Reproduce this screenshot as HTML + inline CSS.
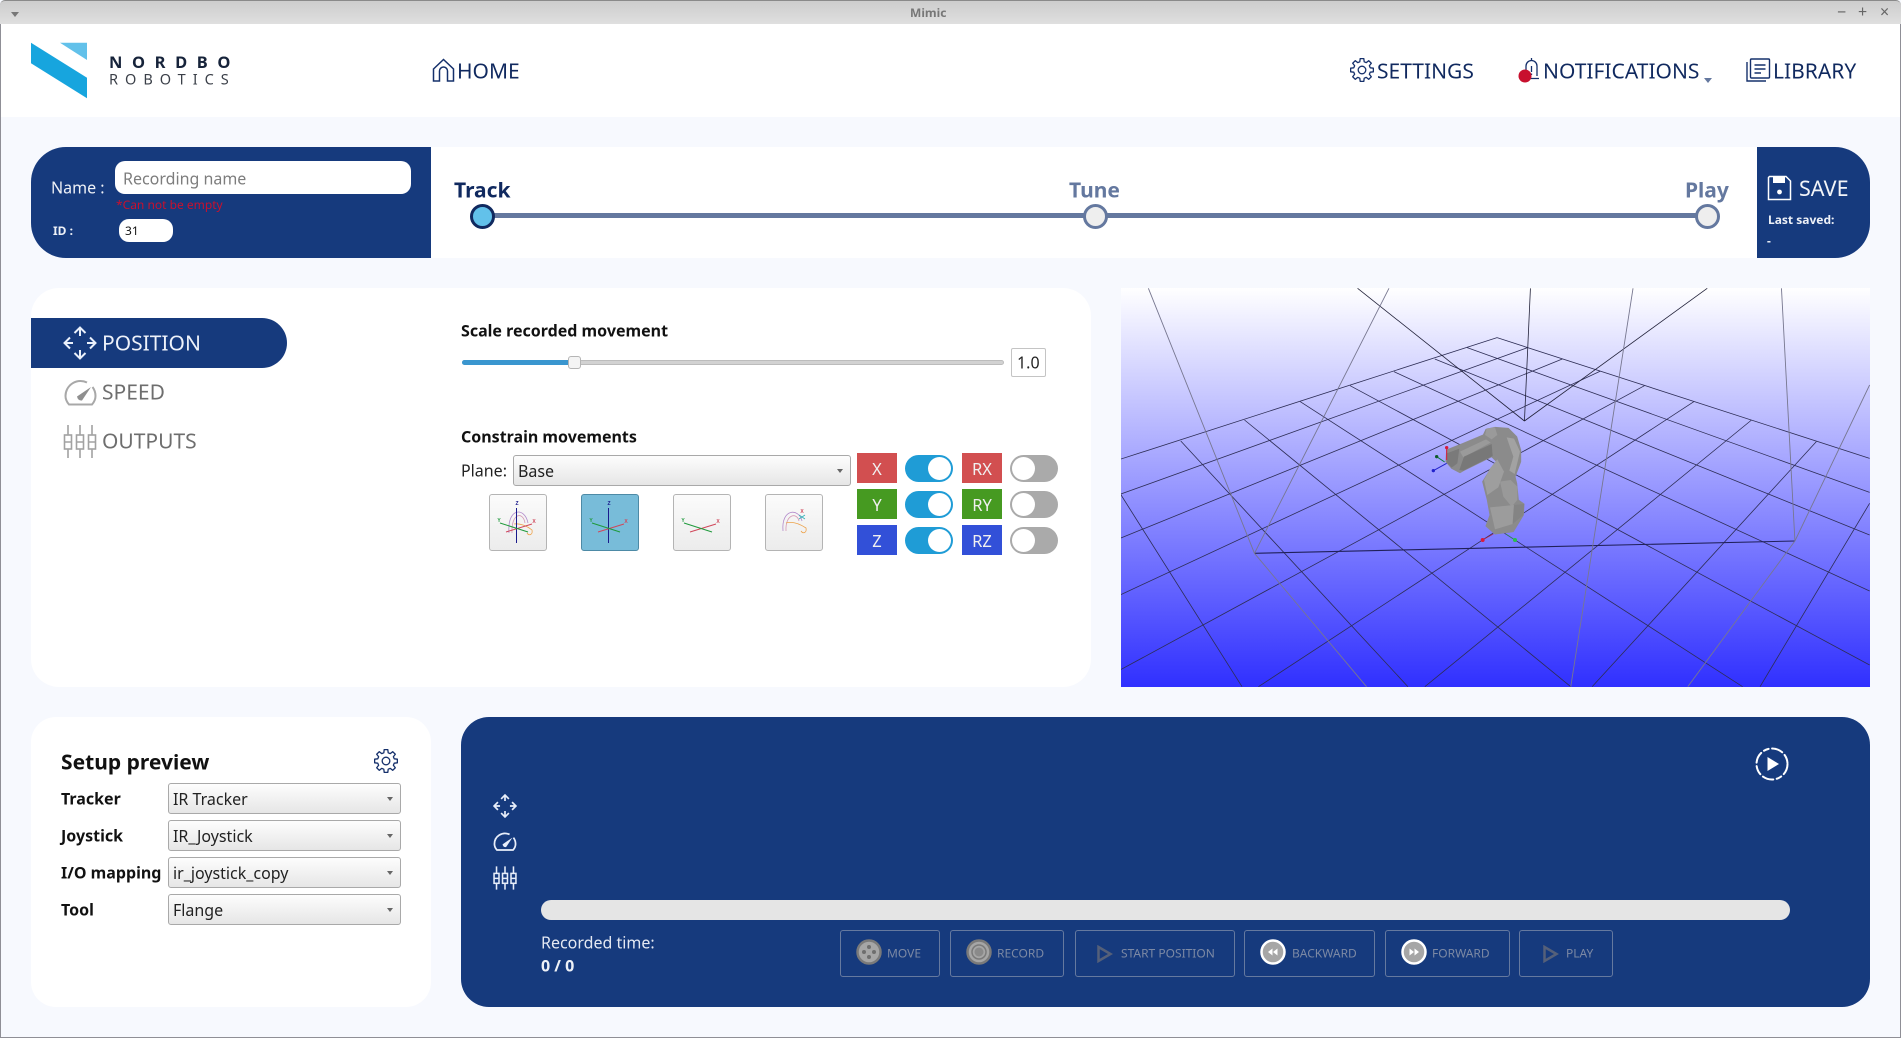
<!DOCTYPE html>
<html><head><meta charset="utf-8"><title>Mimic</title>
<style>
html,body{margin:0;padding:0;width:1901px;height:1038px;overflow:hidden;background:#f7f9fe;font-family:"Noto Sans","Noto Sans CJK JP","Liberation Sans",sans-serif}
*{box-sizing:border-box}
.a{position:absolute}
.t{position:absolute;white-space:nowrap;transform:translateY(-50%);line-height:1.2}
.nav{font-size:21px;color:#10295f}
.side{font-size:21px;color:#6e6e6e}
.lab{font-size:16px;font-weight:700;color:#111}
.sel{position:absolute;border:1px solid #a9a9a9;border-radius:3px;background:linear-gradient(#fdfdfd,#e6e6e6);font-size:16px;color:#222}
.sel span{position:absolute;left:4px;top:50%;transform:translateY(-50%);white-space:nowrap}
.sel i{position:absolute;right:7px;top:50%;margin-top:-2px;border:3.5px solid transparent;border-top:4px solid #666;border-bottom:0}
.axb{position:absolute;top:494px;width:58px;height:57px;border:1px solid #b4b4b4;border-radius:3px;background:linear-gradient(#fbfbfb,#ececec)}
.box{position:absolute;width:40px;height:30px;color:#f0f0f0;font-size:16.5px;text-align:center;line-height:31px}
.tg{position:absolute;width:48px;height:27px;border-radius:14px}
.tg i{position:absolute;top:2px;width:23px;height:23px;border-radius:50%;background:#fff}
.on{background:#1f9cd6}.on i{right:2px}
.off{background:#aaa}.off i{left:2px}
.cb{position:absolute;top:930px;height:47px;border:1px solid #65799f;border-radius:3px}
.cbt{position:absolute;top:953px;transform:translateY(-50%);white-space:nowrap;font-size:12px;color:#7c89a4}
</style></head><body>

<!-- title bar -->
<div class="a" style="left:0;top:0;width:1901px;height:24px;background:linear-gradient(#cdcdcd,#dfdfdf);border-top:1px solid #8a8a8a;border-radius:5px 5px 0 0"></div>
<div class="a" style="left:11px;top:12px;border:4px solid transparent;border-top:5px solid #777;border-bottom:0"></div>
<div class="t" style="left:910px;top:13px;font-size:12px;font-weight:700;color:#777">Mimic</div>
<div class="t" style="left:1837px;top:12px;font-size:16px;color:#666">−</div>
<div class="t" style="left:1858px;top:12px;font-size:16px;color:#666">+</div>
<div class="t" style="left:1880px;top:12px;font-size:16px;color:#666">×</div>

<!-- header -->
<div class="a" style="left:0;top:24px;width:1901px;height:93px;background:#fff"></div>
<svg class="a" style="left:0;top:0" width="120" height="110"><polygon points="31,42.7 87,77.7 87,98.3 31,63.3" fill="#17a5de"/><polygon points="60,42.7 87,42.7 87,60" fill="#62c1ea"/></svg>
<div class="t" style="left:109px;top:62px;font-size:16.5px;font-weight:700;letter-spacing:9.6px;color:#16233a">NORDBO</div>
<div class="t" style="left:109px;top:80px;font-size:14.5px;letter-spacing:7px;color:#3a3f48">ROBOTICS</div>

<svg class="a" style="left:432px;top:58px" width="23" height="24" viewBox="0 0 23 24" fill="none" stroke="#15306b" stroke-width="1.5"><path d="M1.5 11 L11.5 1.5 L21.500 11 V23 H15.500 V13 A4 4 0 0 0 7.500 13 V23 H1.500 Z"/></svg>
<div class="t nav" style="left:457px;top:72px">HOME</div>

<svg class="a" style="left:1350px;top:58px" width="24" height="24" viewBox="0 0 24 24" fill="none" stroke="#15306b" stroke-width="1.300" stroke-linejoin="round"><g transform="translate(12 12)"><polygon points="-2.2,-8.21 -1.8,-11.36 1.8,-11.36 2.2,-8.21 4.25,-7.36 6.76,-9.3 9.3,-6.76 7.36,-4.25 8.21,-2.2 11.36,-1.8 11.36,1.8 8.21,2.2 7.36,4.25 9.3,6.76 6.76,9.3 4.25,7.36 2.2,8.21 1.8,11.36 -1.8,11.36 -2.2,8.21 -4.25,7.36 -6.76,9.3 -9.3,6.76 -7.36,4.25 -8.21,2.2 -11.36,1.8 -11.36,-1.8 -8.21,-2.2 -7.36,-4.25 -9.3,-6.76 -6.76,-9.3 -4.25,-7.36"/><circle r="3.800"/></g></svg>
<div class="t nav" style="left:1377px;top:72px">SETTINGS</div>

<svg class="a" style="left:1518px;top:57px" width="24" height="26" viewBox="0 0 24 26" fill="none" stroke="#15306b" stroke-width="1.3"><path d="M13.5 1v3M8 19V9a5.5 5.5 0 0 1 11 0v10M5 21.5H21M13.5 9v6M13.5 16.5v1.5"/><circle cx="7" cy="19" r="6.5" fill="#c8102e" stroke="none"/></svg>
<div class="t nav" style="left:1543px;top:72px">NOTIFICATIONS</div>
<div class="a" style="left:1704px;top:78px;border:4px solid transparent;border-top:5px solid #64789f;border-bottom:0"></div>

<svg class="a" style="left:1746px;top:58px" width="25" height="24" viewBox="0 0 25 24" fill="none" stroke="#15306b" stroke-width="1.4"><rect x="4.5" y="1" width="19" height="19" rx="1"/><path d="M1 4V23H20M8.5 7H19.5M8.5 11H19.5M8.5 15H15"/></svg>
<div class="t nav" style="left:1773px;top:72px">LIBRARY</div>

<!-- top panel -->
<div class="a" style="left:31px;top:147px;width:400px;height:111px;background:#163a7d;border-radius:35px 0 0 35px"></div>
<div class="a" style="left:431px;top:147px;width:1326px;height:111px;background:#fff"></div>
<div class="a" style="left:1757px;top:147px;width:113px;height:111px;background:#163a7d;border-radius:0 35px 35px 0"></div>
<div class="t" style="left:51px;top:188px;font-size:16px;color:#eef1f7">Name :</div>
<div class="a" style="left:115px;top:161px;width:296px;height:33px;background:#fff;border-radius:10px"></div>
<div class="t" style="left:123px;top:179px;font-size:16px;color:#7d7d7d">Recording name</div>
<div class="t" style="left:116px;top:205px;font-size:12px;color:#c8102e">*Can not be empty</div>
<div class="t" style="left:53px;top:231px;font-size:12px;font-weight:700;color:#eef1f7">ID :</div>
<div class="a" style="left:119px;top:219px;width:54px;height:23px;background:#fff;border-radius:10px"></div>
<div class="t" style="left:125px;top:231px;font-size:12px;color:#111">31</div>

<div class="a" style="left:482px;top:213px;width:1225px;height:5px;background:#64789f"></div>
<div class="a" style="left:469.5px;top:204px;width:25px;height:25px;border-radius:50%;background:#62c1ea;border:3px solid #10295f"></div>
<div class="a" style="left:1082.5px;top:204px;width:25px;height:25px;border-radius:50%;background:#eee;border:3px solid #64789f"></div>
<div class="a" style="left:1694.5px;top:204px;width:25px;height:25px;border-radius:50%;background:#eee;border:3px solid #64789f"></div>
<div class="t" style="left:454px;top:191px;font-size:21px;font-weight:700;color:#10295f">Track</div>
<div class="t" style="left:1069px;top:191px;font-size:21px;font-weight:700;color:#64789f">Tune</div>
<div class="t" style="left:1685px;top:191px;font-size:21px;font-weight:700;color:#64789f">Play</div>

<svg class="a" style="left:1767px;top:175px" width="25" height="26" viewBox="0 0 25 26" fill="none" stroke="#fff" stroke-width="1.5"><path d="M2.5 1.5H19L23.5 6V24.5H1.5V2.5Z"/><rect x="6" y="2" width="12" height="6" fill="#fff" stroke="none"/><circle cx="12.5" cy="17" r="2.4" fill="#fff" stroke="none"/></svg>
<div class="t" style="left:1799px;top:189px;font-size:21.5px;color:#f2f4f8">SAVE</div>
<div class="t" style="left:1768px;top:220px;font-size:12px;font-weight:700;color:#eef1f7">Last saved:</div>
<div class="t" style="left:1767px;top:241px;font-size:12px;font-weight:700;color:#eef1f7">-</div>

<!-- middle left -->
<div class="a" style="left:31px;top:288px;width:1060px;height:399px;background:#fff;border-radius:28px"></div>
<div class="a" style="left:31px;top:318px;width:256px;height:50px;background:#163a7d;border-radius:0 25px 25px 0"></div>
<svg class="a" style="left:63px;top:326px" width="34" height="34" viewBox="0 0 34 34" fill="none" stroke="#eaf0fb" stroke-width="2"><path d="M17 10V2M11.500 7L17 1.500L22.500 7M17 24V32M11.500 27L17 32.500L22.500 27M10 17H2M7 11.500L1.500 17L7 22.500M24 17H32M27 11.500L32.500 17L27 22.500"/></svg>
<div class="t" style="left:102px;top:344px;font-size:21px;color:#eef2fa">POSITION</div>
<svg class="a" style="left:64px;top:379px" width="33" height="27" viewBox="0 0 33 27" fill="none" stroke="#a8a8a8" stroke-width="2"><path d="M23 3.500A15 15 0 0 0 1.500 17Q1.500 21.500 5 25.500H28Q31.500 21.500 31.500 17Q31.500 12 28.500 8"/><path d="M13 17.500L27 8L18 21.500Q14 22 13 17.500Z" fill="#8f8f8f" stroke="none"/></svg>
<div class="t side" style="left:102px;top:393px">SPEED</div>
<svg class="a" style="left:63px;top:425px" width="34" height="33" viewBox="0 0 34 33" fill="none" stroke="#a2a2a2" stroke-width="1.6"><path d="M5 0V10M5 24V33M17 0V10M17 24V33M29 0V10M29 24V33"/><rect x="1.500" y="10" width="7" height="14"/><rect x="13.500" y="10" width="7" height="14"/><rect x="25.500" y="10" width="7" height="14"/><path d="M1.500 17H8.500M13.500 17H20.500M25.500 17H32.500"/></svg>
<div class="t side" style="left:102px;top:442px">OUTPUTS</div>

<div class="t" style="left:461px;top:331px;font-size:16px;font-weight:700;color:#111">Scale recorded movement</div>
<div class="a" style="left:462px;top:359.500px;width:542px;height:5px;background:#d2d2d2;border:1px solid #bcbcbc;border-radius:3px"></div>
<div class="a" style="left:462px;top:359.500px;width:110px;height:5px;background:#3a96cf;border-radius:3px"></div>
<div class="a" style="left:568px;top:356px;width:13px;height:13px;background:#f4f4f4;border:1px solid #b5b5b5;border-radius:3px"></div>
<div class="a" style="left:1011px;top:348px;width:35px;height:29px;background:#fff;border:1px solid #c4c4c4;border-radius:2px"></div>
<div class="t" style="left:1017px;top:363px;font-size:16px;color:#222">1.0</div>

<div class="t" style="left:461px;top:437px;font-size:16px;font-weight:700;color:#111">Constrain movements</div>
<div class="t" style="left:461px;top:471px;font-size:16px;color:#222">Plane:</div>
<div class="sel" style="left:513px;top:455px;width:338px;height:31px"><span>Base</span><i></i></div>

<div class="axb" style="left:489px"><svg width="56" height="55" viewBox="0 0 56 55" fill="none" font-family="Liberation Sans,sans-serif" font-size="5" font-weight="700" text-anchor="middle" stroke-width=".8"><path d="M19 38C17 12 35 12 38 28" stroke="#b28acb"/><path d="M22 38C21 18 33 16 35 28" stroke="#d59ab5"/><path d="M24 29C30 28 37 31 42 35C43 40 39 41 37 38" stroke="#eda24a"/><path d="M26.500 13V48" stroke="#1a1a8c" stroke-width="1"/><path d="M16 37L42 29" stroke="#d0475a" stroke-width="1"/><path d="M10 28L38 37" stroke="#1f9a3c" stroke-width="1"/><text x="27" y="10" fill="#1a1a8c" stroke="none">Z</text><text x="44" y="28" fill="#d0475a" stroke="none">X</text><text x="9" y="27" fill="#1f9a3c" stroke="none">Y</text></svg></div>
<div class="axb" style="left:581px;background:#78bcd9;border-color:#4d8aa6"><svg width="56" height="55" viewBox="0 0 56 55" fill="none" font-family="Liberation Sans,sans-serif" font-size="5" font-weight="700" text-anchor="middle"><path d="M26.500 13V48" stroke="#1a1a8c" stroke-width="1"/><path d="M16 37L42 29" stroke="#d0475a" stroke-width="1"/><path d="M10 28L38 37" stroke="#1f9a3c" stroke-width="1"/><text x="27" y="10" fill="#1a1a8c" stroke="none">Z</text><text x="44" y="28" fill="#d0475a" stroke="none">X</text><text x="9" y="27" fill="#1f9a3c" stroke="none">Y</text></svg></div>
<div class="axb" style="left:673px"><svg width="56" height="55" viewBox="0 0 56 55" fill="none" font-family="Liberation Sans,sans-serif" font-size="5" font-weight="700" text-anchor="middle"><path d="M16 37L42 29" stroke="#d0475a" stroke-width="1"/><path d="M10 28L38 37" stroke="#1f9a3c" stroke-width="1"/><text x="44" y="28" fill="#d0475a" stroke="none">X</text><text x="9" y="27" fill="#1f9a3c" stroke="none">Y</text></svg></div>
<div class="axb" style="left:765px"><svg width="56" height="55" viewBox="0 0 56 55" fill="none" font-family="Liberation Sans,sans-serif" font-size="5" font-weight="700" text-anchor="middle" stroke-width=".8"><path d="M17 36C15 13 33 13 36 26" stroke="#b28acb"/><path d="M20 36C19 19 31 17 33 26" stroke="#d59ab5"/><path d="M20 28C27 26 34 29 40 33C41 38 37 39 35 36" stroke="#eda24a"/><path d="M33 20L39 24M39 20L33 24" stroke="#35b0b8"/><text x="36" y="18" fill="#d0475a" stroke="none">X</text></svg></div>

<div class="box" style="left:857px;top:453px;background:#d24f50">X</div>
<div class="box" style="left:857px;top:489px;background:#469a21">Y</div>
<div class="box" style="left:857px;top:525px;background:#3250d8">Z</div>
<div class="box" style="left:962px;top:453px;background:#d24f50">RX</div>
<div class="box" style="left:962px;top:489px;background:#469a21">RY</div>
<div class="box" style="left:962px;top:525px;background:#3250d8">RZ</div>
<div class="tg on" style="left:905px;top:455px"><i></i></div>
<div class="tg on" style="left:905px;top:491px"><i></i></div>
<div class="tg on" style="left:905px;top:527px"><i></i></div>
<div class="tg off" style="left:1010px;top:455px"><i></i></div>
<div class="tg off" style="left:1010px;top:491px"><i></i></div>
<div class="tg off" style="left:1010px;top:527px"><i></i></div>

<!-- 3D viewport -->
<div class="a" style="left:1121px;top:288px;width:749px;height:399px;background:linear-gradient(#ffffff,#3030ff);overflow:hidden">
<svg class="a" style="left:-1px;top:-3px" width="781" height="410" viewBox="0 0 1568 1230" preserveAspectRatio="none" fill="none">
<path vector-effect="non-scaling-stroke" stroke="#2d2d55" stroke-width=".8" d="M757 158L0 523M757 158L1505 520M697 188L1505 622M632 222L1505 750M550 260L1505 918M462 302L1505 1140M362 350L1250 1205M250 405L905 1205M122 468L578 1205M0 625L245 1205M818 188L0 628M888 222L0 760M965 258L0 930M1053 302L0 1155M1152 350L278 1205M1268 405L612 1205M1398 470L948 1205M1505 655L1285 1205"/>
<path vector-effect="non-scaling-stroke" stroke="#22223a" stroke-width=".8" d="M477 10L812 408M1179 10L812 408M824 10L812 408"/>
<path vector-effect="non-scaling-stroke" d="M270 805L1355 768" stroke="#20205a" stroke-width="1.100"/>
<path vector-effect="non-scaling-stroke" d="M57 10L270 805L495 1205M540 10L270 805M1328 10L1355 768L1140 1205M1030 10L905 1205M1505 300L1355 768" stroke="#777790" stroke-width=".9"/>
</svg>
</div>
<svg class="a" style="left:1380px;top:400px" width="200" height="170" viewBox="0 0 600 510">
<polygon points="200,150 250,130 310,105 318,88 345,82 385,85 410,110 422,150 422,185 405,230 410,250 415,300 432,312 430,345 400,395 345,402 318,378 330,345 322,300 308,245 330,210 350,185 335,170 250,212 240,218 215,205 198,185" fill="#8b8b8b" stroke="#8b8b8b" stroke-width="3" stroke-linejoin="round"/>
<polygon points="320,85 345,82 352,105 335,118 315,105" fill="#9a9a9a"/>
<polygon points="380,112 402,116 420,155 404,222 388,212 400,170" fill="#a2a2a2"/>
<polygon points="240,155 318,118 332,128 250,172" fill="#9a9a9a"/>
<polygon points="200,160 238,146 232,190 215,203 200,188" fill="#7a7a7a"/>
<polygon points="238,210 252,170 335,132 338,168 250,212" fill="#787878"/>
<polygon points="312,240 330,205 352,178 372,215 355,262 322,285" fill="#9e9e9e"/>
<polygon points="360,245 392,240 412,260 412,300 395,320 370,290" fill="#999"/>
<polygon points="330,322 402,315 398,372 345,388" fill="#9c9c9c"/>
<polygon points="402,315 432,312 430,345 398,372" fill="#848484"/>
<path d="M200 145V180" stroke="#d81a3c" stroke-width="3"/><path d="M160 212L200 190" stroke="#2222cc" stroke-width="3"/><path d="M170 170L194 186" stroke="#0d7a3c" stroke-width="3"/>
<path d="M308 420L340 402" stroke="#c02040" stroke-width="2"/><path d="M405 420L378 402" stroke="#2a9a4a" stroke-width="2"/>
<circle cx="200" cy="143" r="5" fill="#d81a3c"/><circle cx="170" cy="170" r="5" fill="#0d5a2c"/><circle cx="160" cy="212" r="5" fill="#2222cc"/><circle cx="308" cy="420" r="6" fill="#d81a3c"/><circle cx="405" cy="420" r="6" fill="#28c04a"/>
</svg>

<!-- setup -->
<div class="a" style="left:31px;top:717px;width:400px;height:290px;background:#fff;border-radius:25px"></div>
<div class="t" style="left:61px;top:763px;font-size:21px;font-weight:700;color:#111">Setup preview</div>
<svg class="a" style="left:374px;top:749px" width="24" height="24" viewBox="0 0 24 24" fill="none" stroke="#15306b" stroke-width="1.300" stroke-linejoin="round"><g transform="translate(12 12)"><polygon points="-2.2,-8.21 -1.8,-11.36 1.8,-11.36 2.2,-8.21 4.25,-7.36 6.76,-9.3 9.3,-6.76 7.36,-4.25 8.21,-2.2 11.36,-1.8 11.36,1.8 8.21,2.2 7.36,4.25 9.3,6.76 6.76,9.3 4.25,7.36 2.2,8.21 1.8,11.36 -1.8,11.36 -2.2,8.21 -4.25,7.36 -6.76,9.3 -9.3,6.76 -7.36,4.25 -8.21,2.2 -11.36,1.8 -11.36,-1.8 -8.21,-2.2 -7.36,-4.25 -9.3,-6.76 -6.76,-9.3 -4.25,-7.36"/><circle r="3.800"/></g></svg>
<div class="t lab" style="left:61px;top:799px">Tracker</div>
<div class="t lab" style="left:61px;top:836px">Joystick</div>
<div class="t lab" style="left:61px;top:873px">I/O mapping</div>
<div class="t lab" style="left:61px;top:910px">Tool</div>
<div class="sel" style="left:168px;top:783px;width:233px;height:31px"><span>IR Tracker</span><i></i></div>
<div class="sel" style="left:168px;top:820px;width:233px;height:31px"><span>IR_Joystick</span><i></i></div>
<div class="sel" style="left:168px;top:857px;width:233px;height:31px"><span>ir_joystick_copy</span><i></i></div>
<div class="sel" style="left:168px;top:894px;width:233px;height:31px"><span>Flange</span><i></i></div>

<!-- timeline panel -->
<div class="a" style="left:461px;top:717px;width:1409px;height:290px;background:#163a7d;border-radius:28px"></div>
<svg class="a" style="left:493px;top:794px" width="24" height="24" viewBox="0 0 34 34" fill="none" stroke="#e8eefa" stroke-width="2.400"><path d="M17 10V2M11.500 7L17 1.500L22.500 7M17 24V32M11.500 27L17 32.500L22.500 27M10 17H2M7 11.500L1.500 17L7 22.500M24 17H32M27 11.500L32.500 17L27 22.500"/></svg>
<svg class="a" style="left:493px;top:832px" width="24" height="19" viewBox="0 0 33 27" fill="none" stroke="#e8eefa" stroke-width="2.500"><path d="M23 3.500A15 15 0 0 0 1.500 17Q1.500 21.500 5 25.500H28Q31.500 21.500 31.500 17Q31.500 12 28.500 8"/><path d="M13 17.500L27 8L18 21.500Q14 22 13 17.500Z" fill="#e8eefa" stroke="none"/></svg>
<svg class="a" style="left:493px;top:866px" width="24" height="24" viewBox="0 0 34 33" fill="none" stroke="#e8eefa" stroke-width="2.200"><path d="M5 0V10M5 24V33M17 0V10M17 24V33M29 0V10M29 24V33"/><rect x="1.500" y="10" width="7" height="14"/><rect x="13.500" y="10" width="7" height="14"/><rect x="25.500" y="10" width="7" height="14"/><path d="M1.500 17H8.500M13.500 17H20.500M25.500 17H32.500"/></svg>
<svg class="a" style="left:1755px;top:747px" width="34" height="34" viewBox="0 0 34 34" fill="none"><circle cx="17" cy="17" r="15.500" stroke="#fff" stroke-width="2" stroke-dasharray="11 3.500 5 3.500 11 3.500 9 3.500" stroke-linecap="round"/><path d="M12.500 10L24 17L12.500 24Z" fill="#fff"/></svg>
<div class="a" style="left:541px;top:900px;width:1249px;height:20px;background:#e5e5e5;border-radius:10px"></div>
<div class="t" style="left:541px;top:943px;font-size:16px;color:#e4e8f2">Recorded time:</div>
<div class="t" style="left:541px;top:966px;font-size:16px;font-weight:700;color:#eef1f7">0 / 0</div>

<div class="cb" style="left:840px;width:100px"></div>
<div class="cb" style="left:950px;width:114px"></div>
<div class="cb" style="left:1075px;width:160px"></div>
<div class="cb" style="left:1244px;width:131px"></div>
<div class="cb" style="left:1385px;width:125px"></div>
<div class="cb" style="left:1519px;width:94px"></div>

<svg class="a" style="left:856px;top:939px" width="26" height="26" viewBox="0 0 26 26"><circle cx="13" cy="13" r="11.500" fill="#a6a6a6" stroke="#7a7a7a" stroke-width="2.500"/><g fill="#6e6e6e"><circle cx="13" cy="8" r="2"/><circle cx="13" cy="18" r="2"/><circle cx="8" cy="13" r="2"/><circle cx="18" cy="13" r="2"/></g></svg>
<div class="cbt" style="left:887px">MOVE</div>
<svg class="a" style="left:966px;top:939px" width="26" height="26" viewBox="0 0 26 26" fill="none"><circle cx="13" cy="13" r="11.500" fill="#a6a6a6" stroke="#7a7a7a" stroke-width="2.500"/><circle cx="13" cy="13" r="7" stroke="#7a7a7a" stroke-width="1.500"/><circle cx="13" cy="13" r="4.500" fill="#8a8a8a"/></svg>
<div class="cbt" style="left:997px">RECORD</div>
<svg class="a" style="left:1097px;top:945px" width="16" height="18" viewBox="0 0 16 18" fill="none"><path d="M1.500 2L13.500 9L1.500 16Z" stroke="#556079" stroke-width="2.500"/></svg>
<div class="cbt" style="left:1121px">START POSITION</div>
<svg class="a" style="left:1260px;top:939px" width="26" height="26" viewBox="0 0 26 26"><circle cx="13" cy="13" r="11.500" fill="#a6a6a6" stroke="#fff" stroke-width="2.500"/><path d="M12.500 9.500V16.500L8 13ZM17.500 9.500V16.500L13 13Z" fill="#fff"/></svg>
<div class="cbt" style="left:1292px">BACKWARD</div>
<svg class="a" style="left:1401px;top:939px" width="26" height="26" viewBox="0 0 26 26"><circle cx="13" cy="13" r="11.500" fill="#a6a6a6" stroke="#fff" stroke-width="2.500"/><path d="M8.500 9.500V16.500L13 13ZM13.500 9.500V16.500L18 13Z" fill="#fff"/></svg>
<div class="cbt" style="left:1432px">FORWARD</div>
<svg class="a" style="left:1543px;top:945px" width="16" height="18" viewBox="0 0 16 18" fill="none"><path d="M1.500 2L13.500 9L1.500 16Z" stroke="#556079" stroke-width="2.500"/></svg>
<div class="cbt" style="left:1566px">PLAY</div>

<!-- window frame -->
<div class="a" style="left:0;top:24px;width:1px;height:1014px;background:#8f8f96"></div>
<div class="a" style="left:1900px;top:24px;width:1px;height:1014px;background:#8f8f96"></div>
<div class="a" style="left:0;top:1037px;width:1901px;height:1px;background:#8f8f96"></div>
</body></html>
